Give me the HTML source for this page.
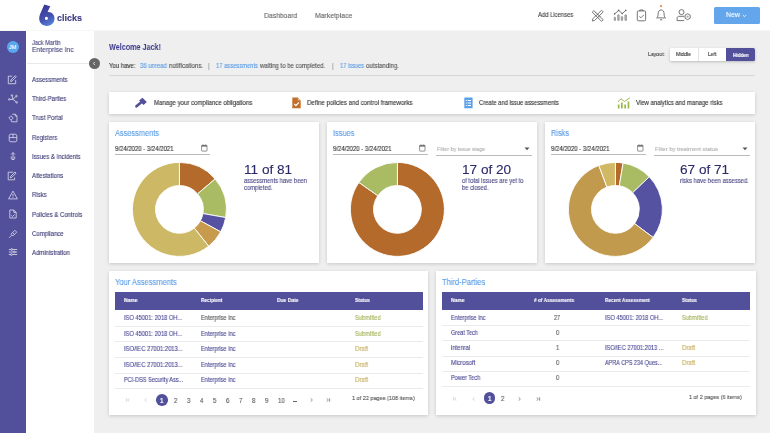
<!DOCTYPE html>
<html><head><meta charset="utf-8">
<style>
*{margin:0;padding:0;box-sizing:border-box}
html,body{width:770px;height:433px;overflow:hidden;background:#efefef;font-family:"Liberation Sans",sans-serif;color:#444}
.a{position:absolute;white-space:nowrap;line-height:1;will-change:transform;-webkit-text-stroke:0.12px currentColor}
</style></head><body>
<div style="position:absolute;left:0px;top:0px;width:770px;height:30px;background:#fff"></div>
<div style="position:absolute;left:0px;top:30px;width:770px;height:1px;background:#f7f7f7"></div>
<svg style="position:absolute;left:36px;top:3px" width="22" height="25" viewBox="0 0 22 25">
<defs><linearGradient id="lg" x1="0.3" y1="0" x2="0.7" y2="1"><stop offset="0" stop-color="#3a3692"/><stop offset="0.6" stop-color="#4452b0"/><stop offset="1" stop-color="#5585dc"/></linearGradient></defs>
<path d="M8.3 1.6 L14.2 3.3 L11.6 9.1 C16 8.6 18.5 12 18.5 15.6 C18.5 19.9 15.2 23 10.9 23 C6.5 23 3.2 19.9 3.2 15.6 C3.2 13.5 3.9 11.6 4.8 9.6 Z M10.4 13.8 A1.5 1.6 0 1 0 10.41 13.8 Z" fill="url(#lg)" fill-rule="evenodd"/>
</svg>
<div class="a" style="left:57.00px;top:14.46px;font-size:8.90px;color:#3b3a86;font-weight:bold;transform:scaleX(1.011);transform-origin:0 0;">clicks</div>
<div class="a" style="left:263.70px;top:12.33px;font-size:7.40px;color:#666;transform:scaleX(0.919);transform-origin:0 0;">Dashboard</div>
<div class="a" style="left:314.70px;top:12.33px;font-size:7.40px;color:#666;transform:scaleX(0.926);transform-origin:0 0;">Marketplace</div>
<div class="a" style="left:538.40px;top:11.83px;font-size:6.46px;color:#444;transform:scaleX(0.910);transform-origin:0 0;">Add Licenses</div>
<svg style="position:absolute;left:585px;top:0px" width="115" height="31" viewBox="585 0 115 31" fill="none" stroke="#666" stroke-width="0.9">
<path d="M593.8 10.6 L592.2 12.2 L601.6 21.3 L603.2 19.7 Z"/><path d="M595 13 L596 12 M597.2 15.2 L598.2 14.2 M599.4 17.4 L600.4 16.4" stroke-width="0.7"/>
<path d="M601.6 10.3 L603.2 11.9 L594.6 20.5 L592.3 21 L592.8 18.7 Z"/>
<path d="M614.6 13.9 L618.6 10.4 L622.3 13.6 L625.8 10.4"/><g fill="#666" stroke="none"><circle cx="614.6" cy="13.9" r="0.8"/><circle cx="618.6" cy="10.4" r="0.8"/><circle cx="622.3" cy="13.6" r="0.8"/><circle cx="625.8" cy="10.4" r="0.8"/></g>
<g fill="#bbb" stroke="#777" stroke-width="0.6"><rect x="614.2" y="17.2" width="1.3" height="3.3" rx="0.4"/><rect x="617.7" y="14.8" width="1.5" height="5.7" rx="0.5"/><rect x="621.2" y="16.6" width="1.5" height="3.9" rx="0.5"/><rect x="624.9" y="14.8" width="1.6" height="5.7" rx="0.5"/></g>
<rect x="637.3" y="10.9" width="8.3" height="9.9" rx="1"/><path d="M639.8 11 V10 H643.1 V11"/><path d="M639.4 16.4 L640.9 17.8 L643.8 14.9"/>
<path d="M656.6 17.9 C657.9 17 658.1 15.6 658.1 13.9 C658.1 11.4 659.3 9.9 661.1 9.9 C662.9 9.9 664.1 11.4 664.1 13.9 C664.1 15.6 664.3 17 665.6 17.9 Z"/><path d="M660 19.8 H662.2"/>
<circle cx="681.5" cy="12.1" r="2.5"/><path d="M684.3 16.3 H679 C677.9 16.3 677.1 17.1 677.1 18.2 V20.6 H684.3"/>
<path d="M687.6 13.7 L690.2 15.2 V18.2 L687.6 19.7 L685 18.2 V15.2 Z"/><circle cx="687.6" cy="16.7" r="1.1" fill="#aaa" stroke="none"/>
</svg>
<div style="position:absolute;left:660.2px;top:4.8px;width:2px;height:2px;background:#e07a30;border-radius:50%"></div>
<div style="position:absolute;left:714px;top:7px;width:46px;height:17px;background:#64a6ec;border-radius:1.5px"></div>
<div class="a" style="left:725.70px;top:10.98px;font-size:7.58px;color:#fff;transform:scaleX(0.910);transform-origin:0 0;">New</div>
<svg style="position:absolute;left:742px;top:14px" width="5" height="4" viewBox="0 0 5 4"><path d="M0.8 1 L2.5 2.7 L4.2 1" stroke="#fff" stroke-width="0.8" fill="none"/></svg>
<div style="position:absolute;left:0px;top:31px;width:26px;height:402px;background:#524f9b"></div>
<div style="position:absolute;left:26px;top:31px;width:68px;height:402px;background:#fff"></div>
<div style="position:absolute;left:6.8px;top:40.6px;width:12.2px;height:12.2px;background:#5ba7ef;border-radius:50%"></div>
<div class="a" style="left:9.10px;top:45.16px;font-size:5.60px;color:#f4f8ff;transform:scaleX(1.018);transform-origin:0 0;">JM</div>
<div class="a" style="left:32.30px;top:40.18px;font-size:6.40px;color:#4a4880;transform:scaleX(0.880);transform-origin:0 0;">Jack Martin</div>
<div class="a" style="left:32.30px;top:45.85px;font-size:7.50px;color:#4a4880;transform:scaleX(0.901);transform-origin:0 0;">Enterprise Inc</div>
<div style="position:absolute;left:27px;top:63px;width:67px;height:1px;background:#e8e8e8"></div>
<div class="a" style="left:31.80px;top:76.69px;font-size:6.59px;color:#3d3b75;transform:scaleX(0.910);transform-origin:0 0;">Assessments</div>
<div class="a" style="left:31.80px;top:95.99px;font-size:6.59px;color:#3d3b75;transform:scaleX(0.910);transform-origin:0 0;">Third-Parties</div>
<div class="a" style="left:31.80px;top:115.29px;font-size:6.59px;color:#3d3b75;transform:scaleX(0.910);transform-origin:0 0;">Trust Portal</div>
<div class="a" style="left:31.80px;top:134.59px;font-size:6.59px;color:#3d3b75;transform:scaleX(0.910);transform-origin:0 0;">Registers</div>
<div class="a" style="left:31.80px;top:153.89px;font-size:6.59px;color:#3d3b75;transform:scaleX(0.910);transform-origin:0 0;">Issues &amp; Incidents</div>
<div class="a" style="left:31.80px;top:173.19px;font-size:6.59px;color:#3d3b75;transform:scaleX(0.910);transform-origin:0 0;">Attestations</div>
<div class="a" style="left:31.80px;top:192.49px;font-size:6.59px;color:#3d3b75;transform:scaleX(0.910);transform-origin:0 0;">Risks</div>
<div class="a" style="left:31.80px;top:211.79px;font-size:6.59px;color:#3d3b75;transform:scaleX(0.910);transform-origin:0 0;">Policies &amp; Controls</div>
<div class="a" style="left:31.80px;top:231.09px;font-size:6.59px;color:#3d3b75;transform:scaleX(0.910);transform-origin:0 0;">Compliance</div>
<div class="a" style="left:31.80px;top:250.39px;font-size:6.59px;color:#3d3b75;transform:scaleX(0.910);transform-origin:0 0;">Administration</div>
<svg style="position:absolute;left:6.7px;top:75.0px" width="10" height="10" viewBox="0 0 10 10" fill="none" stroke="#e8e8f4" stroke-width="0.75"><path d="M5.2 1.2 H1.3 V8.7 H8.7 V5"/><path d="M3.6 6.4 L3.9 5 L8.2 0.7 L9.3 1.8 L5 6.1 Z"/></svg>
<svg style="position:absolute;left:7.7px;top:93.8px" width="10" height="10" viewBox="0 0 10 10" fill="none" stroke="#e8e8f4" stroke-width="0.75"><circle cx="1.3" cy="5.4" r="0.8"/><circle cx="3.9" cy="1.4" r="0.7"/><circle cx="8.4" cy="2.1" r="0.8"/><circle cx="8.7" cy="8.4" r="0.8"/><path d="M2.1 5.4 H5 L7.7 2.6 M5 5.4 L8.1 7.8 M4.2 2.1 L5 5.4"/></svg>
<svg style="position:absolute;left:7.5px;top:113.2px" width="10" height="10" viewBox="0 0 10 10" fill="none" stroke="#e8e8f4" stroke-width="0.75"><path d="M4.2 1.2 H7.3 L9 2.9 V8.8 H3.5 V7.3"/><path d="M7.3 1.2 V2.9 H9"/><path d="M0.8 5 L3 2.8 L5.2 5 L3 7.2 Z"/></svg>
<svg style="position:absolute;left:7.6px;top:132.5px" width="10" height="10" viewBox="0 0 10 10" fill="none" stroke="#e8e8f4" stroke-width="0.75"><rect x="1.2" y="1.2" width="7.6" height="7.6" rx="1.6"/><path d="M1.2 4.6 H8.8 M5 1.2 V4.6"/></svg>
<svg style="position:absolute;left:7.7px;top:151.4px" width="10" height="10" viewBox="0 0 10 10" fill="none" stroke="#e8e8f4" stroke-width="0.75"><path d="M5 8.5 V1.8 M3.2 3.6 L5 1.5 L6.8 3.6"/><path d="M3.3 5.5 V7.6 C3.3 9 6.7 9 6.7 7.6 V5.5"/></svg>
<svg style="position:absolute;left:7.4px;top:170.6px" width="10" height="10" viewBox="0 0 10 10" fill="none" stroke="#e8e8f4" stroke-width="0.75"><path d="M6.2 1.2 H1.2 V8.8 H7.6 V6.5"/><path d="M3.4 6.8 L3.7 5.3 L8 1 L9.1 2.1 L4.8 6.4 Z"/></svg>
<svg style="position:absolute;left:7.5px;top:189.8px" width="10" height="10" viewBox="0 0 10 10" fill="none" stroke="#e8e8f4" stroke-width="0.75"><path d="M5 1.1 L9.4 8.9 H0.6 Z"/><path d="M5 4 V6.6 M5 7.4 V8"/></svg>
<svg style="position:absolute;left:7.8px;top:209.0px" width="10" height="10" viewBox="0 0 10 10" fill="none" stroke="#e8e8f4" stroke-width="0.75"><path d="M1.8 1 H5.8 L8.2 3.4 V9 H1.8 Z"/><path d="M5.8 1 V3.4 H8.2"/><path d="M3.4 6.4 L4.6 7.5 L6.6 5.4"/></svg>
<svg style="position:absolute;left:7.6px;top:228.5px" width="10" height="10" viewBox="0 0 10 10" fill="none" stroke="#e8e8f4" stroke-width="0.75"><path d="M1.2 8.8 L3.6 6.4"/><path d="M3 5.2 L6.9 1.3 L8.7 3.1 L4.8 7 Z"/><path d="M4.6 3.6 L6.4 5.4"/></svg>
<svg style="position:absolute;left:7.8px;top:247.2px" width="10" height="10" viewBox="0 0 10 10" fill="none" stroke="#e8e8f4" stroke-width="0.75"><path d="M0.8 2.5 H9.2 M0.8 5 H9.2 M0.8 7.5 H9.2"/><circle cx="3.8" cy="2.5" r="0.9" fill="#524f9b"/><circle cx="6.4" cy="5" r="0.9" fill="#524f9b"/><circle cx="3.4" cy="7.5" r="0.9" fill="#524f9b"/></svg>
<div style="position:absolute;left:89px;top:58px;width:11px;height:11px;background:#666;border-radius:50%"></div>
<svg style="position:absolute;left:89px;top:58px" width="11" height="11" viewBox="0 0 11 11"><path d="M6 4.1 L4.3 5.5 L6 6.9" stroke="#eee" stroke-width="0.75" fill="none"/></svg>
<div class="a" style="left:109.30px;top:42.59px;font-size:8.40px;color:#38368a;font-weight:bold;transform:scaleX(0.860);transform-origin:0 0;-webkit-text-stroke:0">Welcome Jack!</div>
<div class="a" style="left:109.30px;top:62.61px;font-size:6.60px;color:#333;transform:scaleX(0.909);transform-origin:0 0;">You have:</div>
<div class="a" style="left:140.10px;top:62.61px;font-size:6.60px;color:#5a9ce6;transform:scaleX(0.905);transform-origin:0 0;">36 unread</div>
<div class="a" style="left:168.90px;top:62.61px;font-size:6.60px;color:#555;transform:scaleX(0.932);transform-origin:0 0;">notifications.</div>
<div class="a" style="left:208.30px;top:62.61px;font-size:6.60px;color:#999;transform:scaleX(0.909);transform-origin:0 0;">|</div>
<div class="a" style="left:216.00px;top:62.61px;font-size:6.60px;color:#5a9ce6;transform:scaleX(0.880);transform-origin:0 0;">17 assessments</div>
<div class="a" style="left:259.50px;top:62.61px;font-size:6.60px;color:#555;transform:scaleX(0.917);transform-origin:0 0;">waiting to be completed.</div>
<div class="a" style="left:332.00px;top:62.61px;font-size:6.60px;color:#999;transform:scaleX(0.909);transform-origin:0 0;">|</div>
<div class="a" style="left:339.70px;top:62.61px;font-size:6.60px;color:#5a9ce6;transform:scaleX(0.864);transform-origin:0 0;">17 issues</div>
<div class="a" style="left:365.90px;top:62.61px;font-size:6.60px;color:#555;transform:scaleX(0.917);transform-origin:0 0;">outstanding.</div>
<div style="position:absolute;left:109px;top:75px;width:646px;height:1px;background:#d6d6d6"></div>
<div class="a" style="left:647.60px;top:52.30px;font-size:5.66px;color:#444;transform:scaleX(0.910);transform-origin:0 0;">Layout:</div>
<div style="position:absolute;left:669.5px;top:48px;width:85.5px;height:13px;background:#fff;box-shadow:0 1px 3px rgba(0,0,0,.22);border-radius:1.5px"></div>
<div style="position:absolute;left:698.4px;top:48px;width:0.6px;height:13px;background:#e2e2e2"></div>
<div style="position:absolute;left:726px;top:48px;width:29px;height:13px;background:#524f9b;border-radius:0 1.5px 1.5px 0"></div>
<div class="a" style="left:676.10px;top:52.48px;font-size:5.52px;color:#333;transform:scaleX(0.910);transform-origin:0 0;">Middle</div>
<div class="a" style="left:708.20px;top:52.47px;font-size:5.54px;color:#333;transform:scaleX(0.910);transform-origin:0 0;">Left</div>
<div class="a" style="left:733.10px;top:52.52px;font-size:5.45px;color:#fff;font-weight:bold;transform:scaleX(0.860);transform-origin:0 0;">Hidden</div>
<div style="position:absolute;left:109px;top:92px;width:646px;height:22px;background:#fff;box-shadow:0 1px 3.5px rgba(0,0,0,.17)"></div>
<svg style="position:absolute;left:135px;top:97px" width="13" height="12" viewBox="0 0 13 12">
<path d="M7.4 0.75 L11.8 5.1 L8.5 8 L4.1 3.5 Z" fill="#524f9b"/><path d="M6 5.5 L1.5 9.3" stroke="#524f9b" stroke-width="2.6" stroke-linecap="round"/>
</svg>
<div class="a" style="left:153.60px;top:100.36px;font-size:6.66px;color:#333;transform:scaleX(0.910);transform-origin:0 0;">Manage your compliance obligations</div>
<svg style="position:absolute;left:292px;top:97px" width="9" height="12" viewBox="0 0 9 12">
<path d="M0.3 0.5 H5.8 L8.7 3.4 V11.3 H0.3 Z" fill="#c0702a"/><path d="M5.8 0.5 V3.4 H8.7" fill="#e9b98a"/><path d="M2.3 7 L3.9 8.6 L6.8 5.5" stroke="#fff" stroke-width="1.1" fill="none"/>
</svg>
<div class="a" style="left:307.30px;top:100.31px;font-size:6.75px;color:#333;transform:scaleX(0.910);transform-origin:0 0;">Define policies and control frameworks</div>
<svg style="position:absolute;left:464px;top:97px" width="9" height="12" viewBox="0 0 9 12">
<rect x="0.3" y="0.5" width="8.3" height="10.8" rx="0.6" fill="#5aa0ea"/><g fill="#fff"><rect x="1.8" y="3" width="1" height="1"/><rect x="3.6" y="3" width="3.4" height="1"/><rect x="1.8" y="5.5" width="1" height="1"/><rect x="3.6" y="5.5" width="3.4" height="1"/><rect x="1.8" y="8" width="1" height="1"/><rect x="3.6" y="8" width="3.4" height="1"/></g>
</svg>
<div class="a" style="left:478.60px;top:100.48px;font-size:6.43px;color:#333;transform:scaleX(0.910);transform-origin:0 0;">Create and issue assessments</div>
<svg style="position:absolute;left:617px;top:97px" width="14" height="12" viewBox="0 0 14 12">
<path d="M0.8 5 L4 1.8 L7.5 4.5 L12.8 0.8" stroke="#9cb84a" stroke-width="1" fill="none"/><g fill="#9cb84a"><rect x="0.8" y="7.5" width="1.7" height="4"/><rect x="4" y="5.5" width="1.7" height="6"/><rect x="7.3" y="7.5" width="1.7" height="4"/><rect x="10.6" y="4.5" width="1.7" height="7"/></g>
</svg>
<div class="a" style="left:636.30px;top:100.41px;font-size:6.57px;color:#333;transform:scaleX(0.910);transform-origin:0 0;">View analytics and manage risks</div>
<div style="position:absolute;left:109px;top:122px;width:210px;height:141px;background:#fff;box-shadow:0 1px 3.5px rgba(0,0,0,.17)"></div>
<div class="a" style="left:115.00px;top:129.29px;font-size:8.40px;color:#5a9ce6;transform:scaleX(0.885);transform-origin:0 0;">Assessments</div>
<div class="a" style="left:115.00px;top:145.59px;font-size:6.59px;color:#333;transform:scaleX(0.910);transform-origin:0 0;">9/24/2020 - 3/24/2021</div>
<svg style="position:absolute;left:200.5px;top:143.5px" width="8" height="8" viewBox="0 0 8 8"><rect x="0.6" y="1.3" width="5.4" height="5.8" rx="0.5" fill="none" stroke="#666" stroke-width="0.7"/><rect x="0.6" y="1.3" width="5.4" height="1.3" fill="#666"/><path d="M2 0.5 V1.5 M4.6 0.5 V1.5" stroke="#666" stroke-width="0.6"/></svg>
<div style="position:absolute;left:114.5px;top:154px;width:95px;height:0.8px;background:#bcbcbc"></div>
<svg style="position:absolute;left:130px;top:160px" width="99" height="99" viewBox="-49.400 -49.400 99 99"><path d="M0.000 -47.000 A47 47 0 0 1 35.739 -30.524 L18.174 -15.522 A23.9 23.9 0 0 0 0.000 -23.900 Z" fill="#b36a2b" stroke="#fff" stroke-width="0.9"/><path d="M35.739 -30.524 A47 47 0 0 1 46.286 8.161 L23.537 4.150 A23.9 23.9 0 0 0 18.174 -15.522 Z" fill="#a9bb63" stroke="#fff" stroke-width="0.9"/><path d="M46.286 8.161 A47 47 0 0 1 41.304 22.426 L21.004 11.404 A23.9 23.9 0 0 0 23.537 4.150 Z" fill="#5552a2" stroke="#fff" stroke-width="0.9"/><path d="M41.304 22.426 A47 47 0 0 1 29.258 36.783 L14.878 18.704 A23.9 23.9 0 0 0 21.004 11.404 Z" fill="#c79a4e" stroke="#fff" stroke-width="0.9"/><path d="M29.258 36.783 A47 47 0 1 1 -0.000 -47.000 L-0.000 -23.900 A23.9 23.9 0 1 0 14.878 18.704 Z" fill="#cdb866" stroke="#fff" stroke-width="0.9"/></svg>
<div class="a" style="left:244.00px;top:162.78px;font-size:13.60px;color:#2b2a68;">11 of 81</div>
<div class="a" style="left:244.00px;top:177.96px;font-size:6.42px;color:#4a4884;transform:scaleX(0.910);transform-origin:0 0;">assessments have been</div>
<div class="a" style="left:244.00px;top:185.36px;font-size:6.42px;color:#4a4884;transform:scaleX(0.910);transform-origin:0 0;">completed.</div>
<div style="position:absolute;left:327px;top:122px;width:210px;height:141px;background:#fff;box-shadow:0 1px 3.5px rgba(0,0,0,.17)"></div>
<div class="a" style="left:333.00px;top:129.29px;font-size:8.40px;color:#5a9ce6;transform:scaleX(0.885);transform-origin:0 0;">Issues</div>
<div class="a" style="left:333.00px;top:145.59px;font-size:6.59px;color:#333;transform:scaleX(0.910);transform-origin:0 0;">9/24/2020 - 3/24/2021</div>
<svg style="position:absolute;left:418.5px;top:143.5px" width="8" height="8" viewBox="0 0 8 8"><rect x="0.6" y="1.3" width="5.4" height="5.8" rx="0.5" fill="none" stroke="#666" stroke-width="0.7"/><rect x="0.6" y="1.3" width="5.4" height="1.3" fill="#666"/><path d="M2 0.5 V1.5 M4.6 0.5 V1.5" stroke="#666" stroke-width="0.6"/></svg>
<div style="position:absolute;left:332.5px;top:154px;width:95px;height:0.8px;background:#bcbcbc"></div>
<div class="a" style="left:437.00px;top:146.11px;font-size:6.20px;color:#b0b0b0;transform:scaleX(0.876);transform-origin:0 0;">Filter by issue stage</div>
<svg style="position:absolute;left:523.5px;top:146.5px" width="6" height="4" viewBox="0 0 6 4"><path d="M0.5 0.5 H5.5 L3 3.2 Z" fill="#555"/></svg>
<div style="position:absolute;left:436px;top:155px;width:96px;height:0.8px;background:#bcbcbc"></div>
<svg style="position:absolute;left:348px;top:160px" width="99" height="99" viewBox="-49.400 -49.400 99 99"><path d="M0.000 -47.000 A47 47 0 1 1 -38.500 -26.958 L-19.578 -13.708 A23.9 23.9 0 1 0 0.000 -23.900 Z" fill="#b36a2b" stroke="#fff" stroke-width="0.9"/><path d="M-38.500 -26.958 A47 47 0 0 1 -0.000 -47.000 L-0.000 -23.900 A23.9 23.9 0 0 0 -19.578 -13.708 Z" fill="#a9bb63" stroke="#fff" stroke-width="0.9"/></svg>
<div class="a" style="left:462.00px;top:162.78px;font-size:13.60px;color:#2b2a68;">17 of 20</div>
<div class="a" style="left:462.00px;top:177.96px;font-size:6.42px;color:#4a4884;transform:scaleX(0.910);transform-origin:0 0;">of total issues are yet to</div>
<div class="a" style="left:462.00px;top:185.36px;font-size:6.42px;color:#4a4884;transform:scaleX(0.910);transform-origin:0 0;">be closed.</div>
<div style="position:absolute;left:545px;top:122px;width:210px;height:141px;background:#fff;box-shadow:0 1px 3.5px rgba(0,0,0,.17)"></div>
<div class="a" style="left:551.00px;top:129.29px;font-size:8.40px;color:#5a9ce6;transform:scaleX(0.885);transform-origin:0 0;">Risks</div>
<div class="a" style="left:551.00px;top:145.59px;font-size:6.59px;color:#333;transform:scaleX(0.910);transform-origin:0 0;">9/24/2020 - 3/24/2021</div>
<svg style="position:absolute;left:636.5px;top:143.5px" width="8" height="8" viewBox="0 0 8 8"><rect x="0.6" y="1.3" width="5.4" height="5.8" rx="0.5" fill="none" stroke="#666" stroke-width="0.7"/><rect x="0.6" y="1.3" width="5.4" height="1.3" fill="#666"/><path d="M2 0.5 V1.5 M4.6 0.5 V1.5" stroke="#666" stroke-width="0.6"/></svg>
<div style="position:absolute;left:550.5px;top:154px;width:95px;height:0.8px;background:#bcbcbc"></div>
<div class="a" style="left:655.00px;top:146.11px;font-size:6.20px;color:#b0b0b0;transform:scaleX(0.923);transform-origin:0 0;">Filter by treatment status</div>
<svg style="position:absolute;left:741.5px;top:146.5px" width="6" height="4" viewBox="0 0 6 4"><path d="M0.5 0.5 H5.5 L3 3.2 Z" fill="#555"/></svg>
<div style="position:absolute;left:654px;top:155px;width:96px;height:0.8px;background:#bcbcbc"></div>
<svg style="position:absolute;left:566px;top:160px" width="99" height="99" viewBox="-49.400 -49.400 99 99"><path d="M0.000 -47.000 A47 47 0 0 1 7.676 -46.369 L3.903 -23.579 A23.9 23.9 0 0 0 0.000 -23.900 Z" fill="#b36a2b" stroke="#fff" stroke-width="0.9"/><path d="M7.676 -46.369 A47 47 0 0 1 33.866 -32.590 L17.221 -16.572 A23.9 23.9 0 0 0 3.903 -23.579 Z" fill="#a9bb63" stroke="#fff" stroke-width="0.9"/><path d="M33.866 -32.590 A47 47 0 0 1 37.732 28.023 L19.187 14.250 A23.9 23.9 0 0 0 17.221 -16.572 Z" fill="#5552a2" stroke="#fff" stroke-width="0.9"/><path d="M37.732 28.023 A47 47 0 1 1 -16.613 -43.966 L-8.448 -22.357 A23.9 23.9 0 1 0 19.187 14.250 Z" fill="#c19a4e" stroke="#fff" stroke-width="0.9"/><path d="M-16.613 -43.966 A47 47 0 0 1 -0.000 -47.000 L-0.000 -23.900 A23.9 23.9 0 0 0 -8.448 -22.357 Z" fill="#d0b865" stroke="#fff" stroke-width="0.9"/></svg>
<div class="a" style="left:680.00px;top:162.78px;font-size:13.60px;color:#2b2a68;">67 of 71</div>
<div class="a" style="left:680.00px;top:177.96px;font-size:6.42px;color:#4a4884;transform:scaleX(0.910);transform-origin:0 0;">risks have been assessed.</div>
<div style="position:absolute;left:109px;top:271px;width:319px;height:144px;background:#fff;box-shadow:0 1px 3.5px rgba(0,0,0,.17)"></div>
<div class="a" style="left:115.00px;top:278.32px;font-size:8.60px;color:#5a9ce6;transform:scaleX(0.878);transform-origin:0 0;">Your Assessments</div>
<div style="position:absolute;left:114.7px;top:292px;width:308px;height:18px;background:#524f9b"></div>
<div class="a" style="left:123.80px;top:297.50px;font-size:5.90px;color:#fff;font-weight:bold;transform:scaleX(0.847);transform-origin:0 0;">Name</div>
<div class="a" style="left:200.80px;top:297.50px;font-size:5.90px;color:#fff;font-weight:bold;transform:scaleX(0.805);transform-origin:0 0;">Recipient</div>
<div class="a" style="left:277.30px;top:297.50px;font-size:5.90px;color:#fff;font-weight:bold;transform:scaleX(0.839);transform-origin:0 0;">Due Date</div>
<div class="a" style="left:354.50px;top:297.50px;font-size:5.90px;color:#fff;font-weight:bold;transform:scaleX(0.820);transform-origin:0 0;">Status</div>
<div class="a" style="left:123.80px;top:314.94px;font-size:6.50px;color:#4a4893;transform:scaleX(0.880);transform-origin:0 0;">ISO 45001: 2018 OH...</div>
<div class="a" style="left:200.80px;top:314.94px;font-size:6.50px;color:#555;transform:scaleX(0.860);transform-origin:0 0;">Enterprise Inc</div>
<div class="a" style="left:354.50px;top:314.94px;font-size:6.50px;color:#a3b35c;transform:scaleX(0.878);transform-origin:0 0;">Submitted</div>
<div style="position:absolute;left:114.7px;top:325.7px;width:308px;height:0.8px;background:#ebebeb"></div>
<div class="a" style="left:123.80px;top:330.74px;font-size:6.50px;color:#4a4893;transform:scaleX(0.880);transform-origin:0 0;">ISO 45001: 2018 OH...</div>
<div class="a" style="left:200.80px;top:330.74px;font-size:6.50px;color:#4a4893;transform:scaleX(0.860);transform-origin:0 0;">Enterprise Inc</div>
<div class="a" style="left:354.50px;top:330.74px;font-size:6.50px;color:#a3b35c;transform:scaleX(0.878);transform-origin:0 0;">Submitted</div>
<div style="position:absolute;left:114.7px;top:341.4px;width:308px;height:0.8px;background:#ebebeb"></div>
<div class="a" style="left:123.80px;top:346.24px;font-size:6.50px;color:#4a4893;transform:scaleX(0.897);transform-origin:0 0;">ISO/IEC 27001:2013...</div>
<div class="a" style="left:200.80px;top:346.24px;font-size:6.50px;color:#4a4893;transform:scaleX(0.860);transform-origin:0 0;">Enterprise Inc</div>
<div class="a" style="left:354.50px;top:346.24px;font-size:6.50px;color:#c6ad58;transform:scaleX(0.938);transform-origin:0 0;">Draft</div>
<div style="position:absolute;left:114.7px;top:356.9px;width:308px;height:0.8px;background:#ebebeb"></div>
<div class="a" style="left:123.80px;top:361.74px;font-size:6.50px;color:#4a4893;transform:scaleX(0.897);transform-origin:0 0;">ISO/IEC 27001:2013...</div>
<div class="a" style="left:200.80px;top:361.74px;font-size:6.50px;color:#4a4893;transform:scaleX(0.860);transform-origin:0 0;">Enterprise Inc</div>
<div class="a" style="left:354.50px;top:361.74px;font-size:6.50px;color:#c6ad58;transform:scaleX(0.938);transform-origin:0 0;">Draft</div>
<div style="position:absolute;left:114.7px;top:372.7px;width:308px;height:0.8px;background:#ebebeb"></div>
<div class="a" style="left:123.80px;top:377.24px;font-size:6.50px;color:#4a4893;transform:scaleX(0.854);transform-origin:0 0;">PCI-DSS Security Ass...</div>
<div class="a" style="left:200.80px;top:377.24px;font-size:6.50px;color:#4a4893;transform:scaleX(0.860);transform-origin:0 0;">Enterprise Inc</div>
<div class="a" style="left:354.50px;top:377.24px;font-size:6.50px;color:#c6ad58;transform:scaleX(0.938);transform-origin:0 0;">Draft</div>
<div style="position:absolute;left:114.7px;top:388.2px;width:308px;height:0.8px;background:#ebebeb"></div>
<svg style="position:absolute;left:126px;top:398.30px" width="5" height="4" viewBox="0 0 5 4"><path d="M0.6 0.3 V3.7 M3.4 0.3 L1.6 2 L3.4 3.7" stroke="#d4d4d4" stroke-width="0.9" fill="none"/></svg>
<svg style="position:absolute;left:144px;top:398.30px" width="5" height="4" viewBox="0 0 5 4"><path d="M2.6 0.3 L0.8 2 L2.6 3.7" stroke="#d4d4d4" stroke-width="0.9" fill="none"/></svg>
<div style="position:absolute;left:156.3px;top:394.2px;width:11.7px;height:11.7px;background:#524f9b;border-radius:50%"></div>
<div class="a" style="left:160.40px;top:397.69px;font-size:6.60px;color:#fff;font-weight:bold;transform:scaleX(0.909);transform-origin:0 0;">1</div>
<div class="a" style="left:173.65px;top:397.69px;font-size:6.60px;color:#555;transform:scaleX(0.909);transform-origin:0 0;">2</div>
<div class="a" style="left:186.75px;top:397.69px;font-size:6.60px;color:#555;transform:scaleX(0.909);transform-origin:0 0;">3</div>
<div class="a" style="left:200.05px;top:397.69px;font-size:6.60px;color:#555;transform:scaleX(0.909);transform-origin:0 0;">4</div>
<div class="a" style="left:213.05px;top:397.69px;font-size:6.60px;color:#555;transform:scaleX(0.909);transform-origin:0 0;">5</div>
<div class="a" style="left:225.95px;top:397.69px;font-size:6.60px;color:#555;transform:scaleX(0.909);transform-origin:0 0;">6</div>
<div class="a" style="left:239.05px;top:397.69px;font-size:6.60px;color:#555;transform:scaleX(0.909);transform-origin:0 0;">7</div>
<div class="a" style="left:252.15px;top:397.69px;font-size:6.60px;color:#555;transform:scaleX(0.909);transform-origin:0 0;">8</div>
<div class="a" style="left:265.45px;top:397.69px;font-size:6.60px;color:#555;transform:scaleX(0.909);transform-origin:0 0;">9</div>
<div class="a" style="left:277.90px;top:397.69px;font-size:6.60px;color:#555;transform:scaleX(0.909);transform-origin:0 0;">10</div>
<div style="position:absolute;left:292.8px;top:401px;width:4.2px;height:1px;background:#666"></div>
<svg style="position:absolute;left:310px;top:398.30px" width="5" height="4" viewBox="0 0 5 4"><path d="M0.6 0.3 L2.4 2 L0.6 3.7" stroke="#888" stroke-width="0.9" fill="none"/></svg>
<svg style="position:absolute;left:326.3px;top:398.30px" width="5" height="4" viewBox="0 0 5 4"><path d="M0.6 0.3 L2.4 2 L0.6 3.7 M3.6 0.3 V3.7" stroke="#888" stroke-width="0.9" fill="none"/></svg>
<div class="a" style="left:352.30px;top:394.98px;font-size:6.08px;color:#555;transform:scaleX(0.910);transform-origin:0 0;">1 of 22 pages (108 items)</div>
<div style="position:absolute;left:436px;top:271px;width:320px;height:144px;background:#fff;box-shadow:0 1px 3.5px rgba(0,0,0,.17)"></div>
<div class="a" style="left:442.40px;top:278.12px;font-size:8.60px;color:#5a9ce6;transform:scaleX(0.878);transform-origin:0 0;">Third-Parties</div>
<div style="position:absolute;left:442px;top:292px;width:308px;height:18px;background:#524f9b"></div>
<div class="a" style="left:451.00px;top:297.50px;font-size:5.90px;color:#fff;font-weight:bold;transform:scaleX(0.847);transform-origin:0 0;">Name</div>
<div class="a" style="left:533.70px;top:297.50px;font-size:5.90px;color:#fff;font-weight:bold;transform:scaleX(0.808);transform-origin:0 0;"># of Assessments</div>
<div class="a" style="left:604.70px;top:297.50px;font-size:5.90px;color:#fff;font-weight:bold;transform:scaleX(0.805);transform-origin:0 0;">Recent Assessment</div>
<div class="a" style="left:682.00px;top:297.50px;font-size:5.90px;color:#fff;font-weight:bold;transform:scaleX(0.820);transform-origin:0 0;">Status</div>
<div class="a" style="left:451.00px;top:314.94px;font-size:6.50px;color:#4a4893;transform:scaleX(0.860);transform-origin:0 0;">Enterprise Inc</div>
<div class="a" style="left:554.19px;top:314.94px;font-size:6.50px;color:#555;transform:scaleX(0.862);transform-origin:0 0;">27</div>
<div class="a" style="left:604.70px;top:314.94px;font-size:6.50px;color:#4a4893;transform:scaleX(0.880);transform-origin:0 0;">ISO 45001: 2018 OH...</div>
<div class="a" style="left:682.00px;top:314.94px;font-size:6.50px;color:#a3b35c;transform:scaleX(0.878);transform-origin:0 0;">Submitted</div>
<div style="position:absolute;left:442px;top:324.8px;width:308px;height:0.8px;background:#ebebeb"></div>
<div class="a" style="left:451.00px;top:329.84px;font-size:6.50px;color:#4a4893;transform:scaleX(0.849);transform-origin:0 0;">Great Tech</div>
<div class="a" style="left:555.74px;top:329.84px;font-size:6.50px;color:#555;transform:scaleX(0.862);transform-origin:0 0;">0</div>
<div style="position:absolute;left:442px;top:340.4px;width:308px;height:0.8px;background:#ebebeb"></div>
<div class="a" style="left:451.00px;top:345.44px;font-size:6.50px;color:#4a4893;transform:scaleX(0.895);transform-origin:0 0;">intenral</div>
<div class="a" style="left:555.74px;top:345.44px;font-size:6.50px;color:#555;transform:scaleX(0.862);transform-origin:0 0;">1</div>
<div class="a" style="left:604.70px;top:345.44px;font-size:6.50px;color:#4a4893;transform:scaleX(0.871);transform-origin:0 0;">ISO/IEC 27001:2013 ...</div>
<div class="a" style="left:682.00px;top:345.44px;font-size:6.50px;color:#c6ad58;transform:scaleX(0.938);transform-origin:0 0;">Draft</div>
<div style="position:absolute;left:442px;top:355.7px;width:308px;height:0.8px;background:#ebebeb"></div>
<div class="a" style="left:451.00px;top:360.44px;font-size:6.50px;color:#4a4893;transform:scaleX(0.923);transform-origin:0 0;">Microsoft</div>
<div class="a" style="left:555.74px;top:360.44px;font-size:6.50px;color:#555;transform:scaleX(0.862);transform-origin:0 0;">0</div>
<div class="a" style="left:604.70px;top:360.44px;font-size:6.50px;color:#4a4893;transform:scaleX(0.842);transform-origin:0 0;">APRA CPS 234 Ques...</div>
<div class="a" style="left:682.00px;top:360.44px;font-size:6.50px;color:#c6ad58;transform:scaleX(0.938);transform-origin:0 0;">Draft</div>
<div style="position:absolute;left:442px;top:370.8px;width:308px;height:0.8px;background:#ebebeb"></div>
<div class="a" style="left:451.00px;top:375.44px;font-size:6.50px;color:#4a4893;transform:scaleX(0.863);transform-origin:0 0;">Power Tech</div>
<div class="a" style="left:555.74px;top:375.44px;font-size:6.50px;color:#555;transform:scaleX(0.862);transform-origin:0 0;">0</div>
<div style="position:absolute;left:442px;top:386.0px;width:308px;height:0.8px;background:#ebebeb"></div>
<svg style="position:absolute;left:453.2px;top:396.60px" width="5" height="4" viewBox="0 0 5 4"><path d="M0.6 0.3 V3.7 M3.4 0.3 L1.6 2 L3.4 3.7" stroke="#d4d4d4" stroke-width="0.9" fill="none"/></svg>
<svg style="position:absolute;left:472.3px;top:396.60px" width="5" height="4" viewBox="0 0 5 4"><path d="M2.6 0.3 L0.8 2 L2.6 3.7" stroke="#d4d4d4" stroke-width="0.9" fill="none"/></svg>
<div style="position:absolute;left:483.5px;top:392.1px;width:11.7px;height:11.7px;background:#524f9b;border-radius:50%"></div>
<div class="a" style="left:487.80px;top:395.99px;font-size:6.60px;color:#fff;font-weight:bold;transform:scaleX(0.909);transform-origin:0 0;">1</div>
<div class="a" style="left:500.95px;top:395.99px;font-size:6.60px;color:#555;transform:scaleX(0.909);transform-origin:0 0;">2</div>
<svg style="position:absolute;left:518.3px;top:396.60px" width="5" height="4" viewBox="0 0 5 4"><path d="M0.6 0.3 L2.4 2 L0.6 3.7" stroke="#888" stroke-width="0.9" fill="none"/></svg>
<svg style="position:absolute;left:535.5px;top:396.60px" width="5" height="4" viewBox="0 0 5 4"><path d="M0.6 0.3 L2.4 2 L0.6 3.7 M3.6 0.3 V3.7" stroke="#888" stroke-width="0.9" fill="none"/></svg>
<div class="a" style="left:689.30px;top:394.11px;font-size:6.01px;color:#555;transform:scaleX(0.910);transform-origin:0 0;">1 of 2 pages (6 items)</div>
</body></html>
